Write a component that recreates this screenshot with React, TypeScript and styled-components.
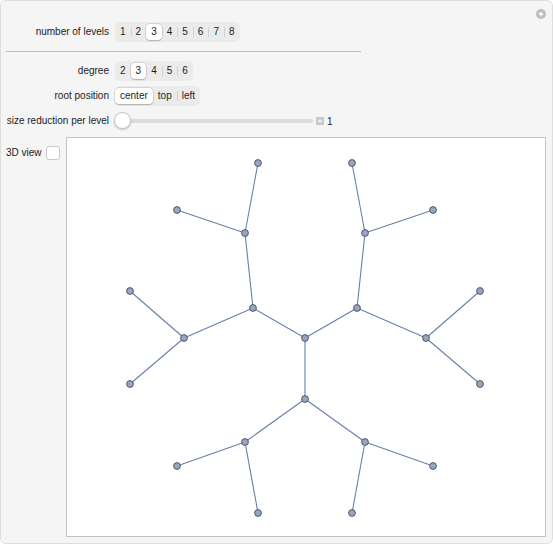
import React, { useState } from "react";
import styled, { createGlobalStyle } from "styled-components";

const Global = createGlobalStyle`
  html, body { margin: 0; padding: 0; background: #ffffff; }
  body { font-family: "Liberation Sans", Arial, sans-serif; }
`;

const Panel = styled.div`
  position: relative;
  box-sizing: border-box;
  width: 553px;
  height: 544px;
  border: 1px solid #dedede;
  border-radius: 6px;
  background: #f5f5f5;
  padding: 21px 0 0 5px;
  display: flex;
  flex-direction: column;
  font-size: 10px;
  color: #222222;
`;

const CornerButton = styled.div`
  position: absolute;
  top: 8px;
  right: 6px;
  width: 10px;
  height: 10px;
  border-radius: 50%;
  background: #bdbdbd;
  display: flex;
  align-items: center;
  justify-content: center;
`;

const Row = styled.div<{ $mt?: number }>`
  display: flex;
  align-items: center;
  height: 20px;
  margin-top: ${(p) => p.$mt ?? 0}px;
  gap: 6px;
`;

const Label = styled.div`
  width: 103px;
  text-align: right;
  white-space: nowrap;
  line-height: 20px;
`;

const Separator = styled.div`
  margin-top: 9px;
  width: 355px;
  height: 1px;
  background: #bcbcbc;
`;

const Setter = styled.div`
  display: flex;
  align-items: stretch;
  height: 20px;
  box-sizing: border-box;
  padding: 2px 0;
  background: #ebebeb;
  border-radius: 5px;
`;

const SetterItem = styled.div<{ $selected: boolean; $sep: boolean }>`
  position: relative;
  display: flex;
  align-items: center;
  padding: 0 5px;
  line-height: 16px;
  border-radius: 4px;
  background: ${(p) => (p.$selected ? "#ffffff" : "transparent")};
  box-shadow: ${(p) =>
    p.$selected ? "0 0 0 0.5px rgba(0,0,0,0.18), 0 1px 1.5px rgba(0,0,0,0.18)" : "none"};
  color: #1e1e1e;
  cursor: default;
  &::before {
    content: "";
    display: ${(p) => (p.$sep ? "block" : "none")};
    position: absolute;
    left: 0;
    top: 3px;
    bottom: 3px;
    width: 1px;
    background: #d2d2d2;
  }
`;

const SliderArea = styled.div`
  position: relative;
  width: 199px;
  height: 20px;
  display: flex;
  align-items: center;
  margin-left: -1px;
`;

const Track = styled.div`
  width: 100%;
  height: 4px;
  border-radius: 2px;
  background: #dcdcdc;
`;

const Thumb = styled.div`
  position: absolute;
  left: 0px;
  top: 1px;
  width: 17px;
  height: 17px;
  box-sizing: border-box;
  border-radius: 50%;
  background: #ffffff;
  border: 0.5px solid #c4c4c4;
  box-shadow: 0 1px 2px rgba(0, 0, 0, 0.2);
`;

const PlusBox = styled.div`
  width: 8px;
  height: 8px;
  margin-left: -3px;
  background: #c6c6c6;
  border-radius: 1px;
  display: flex;
  align-items: center;
  justify-content: center;
`;

const Value = styled.div`
  margin-left: -3px;
`;

const ViewRow = styled.div`
  display: flex;
  align-items: flex-start;
  margin-top: 6px;
`;

const ViewLabel = styled.div`
  width: 35px;
  margin-top: 10px;
  line-height: 12px;
  white-space: nowrap;
`;

const CheckBox = styled.div`
  margin-left: 5px;
  margin-top: 9px;
  width: 14px;
  height: 14px;
  box-sizing: border-box;
  border: 1px solid #c9c9c9;
  border-radius: 3px;
  background: #ffffff;
`;

const Frame = styled.div`
  margin-left: 6px;
  width: 480px;
  height: 400px;
  box-sizing: border-box;
  border: 1px solid #c4c4c4;
  background: #ffffff;
`;

type Pt = [number, number];

const nodes: Record<string, Pt> = {
  r: [305, 338],
  a: [305, 399],
  b: [253, 308],
  c: [357, 308],
  b1: [245, 233],
  b2: [184, 338],
  c1: [365, 233],
  c2: [426, 338],
  a1: [245, 442],
  a2: [365, 442],
  b1a: [258, 163],
  b1b: [177, 210],
  b2a: [130, 291],
  b2b: [130, 384],
  c1a: [352, 163],
  c1b: [433, 210],
  c2a: [480, 291],
  c2b: [480, 384],
  a1a: [177, 466],
  a1b: [258, 513],
  a2a: [433, 466],
  a2b: [352, 513],
};

const edges: [string, string][] = [
  ["r", "a"],
  ["r", "b"],
  ["r", "c"],
  ["b", "b1"],
  ["b", "b2"],
  ["c", "c1"],
  ["c", "c2"],
  ["a", "a1"],
  ["a", "a2"],
  ["b1", "b1a"],
  ["b1", "b1b"],
  ["b2", "b2a"],
  ["b2", "b2b"],
  ["c1", "c1a"],
  ["c1", "c1b"],
  ["c2", "c2a"],
  ["c2", "c2b"],
  ["a1", "a1a"],
  ["a1", "a1b"],
  ["a2", "a2a"],
  ["a2", "a2b"],
];

function SetterBar({ items, selected, onSelect }: { items: string[]; selected: number; onSelect: (i: number) => void }) {
  return (
    <Setter>
      {items.map((it, i) => (
        <SetterItem
          key={it}
          $selected={i === selected}
          $sep={i > 0 && i !== selected && i - 1 !== selected}
          onClick={() => onSelect(i)}
        >
          {it}
        </SetterItem>
      ))}
    </Setter>
  );
}

const PlusIcon = ({ size, color }: { size: number; color: string }) => (
  <svg width={size} height={size} viewBox="0 0 10 10">
    <path d="M5 2.2V7.8M2.2 5H7.8" stroke={color} strokeWidth="1.6" />
  </svg>
);

export default function App() {
  const [levels, setLevels] = useState(2);
  const [degree, setDegree] = useState(1);
  const [root, setRoot] = useState(0);
  return (
    <>
      <Global />
      <Panel>
        <CornerButton>
          <PlusIcon size={8} color="#ffffff" />
        </CornerButton>
        <Row>
          <Label>number of levels</Label>
          <SetterBar items={["1", "2", "3", "4", "5", "6", "7", "8"]} selected={levels} onSelect={setLevels} />
        </Row>
        <Separator />
        <Row $mt={9}>
          <Label>degree</Label>
          <SetterBar items={["2", "3", "4", "5", "6"]} selected={degree} onSelect={setDegree} />
        </Row>
        <Row $mt={5}>
          <Label>root position</Label>
          <SetterBar items={["center", "top", "left"]} selected={root} onSelect={setRoot} />
        </Row>
        <Row $mt={5}>
          <Label>size reduction per level</Label>
          <SliderArea>
            <Track />
            <Thumb />
          </SliderArea>
          <PlusBox>
            <PlusIcon size={8} color="#f2f2f2" />
          </PlusBox>
          <Value>1</Value>
        </Row>
        <ViewRow>
          <ViewLabel>3D view</ViewLabel>
          <CheckBox />
          <Frame>
            <svg width={478} height={398} viewBox="67 138 478 398" style={{ display: "block" }}>
              {edges.map(([p, q]) => {
                const [x1, y1] = nodes[p];
                const [x2, y2] = nodes[q];
                return <line key={p + q} x1={x1} y1={y1} x2={x2} y2={y2} stroke="#6680aa" strokeWidth={1.1} />;
              })}
              {Object.entries(nodes).map(([k, [x, y]]) => (
                <circle key={k} cx={x} cy={y} r={3.4} fill="#97a6c1" stroke="#4a4e57" strokeWidth={0.9} />
              ))}
            </svg>
          </Frame>
        </ViewRow>
      </Panel>
    </>
  );
}
